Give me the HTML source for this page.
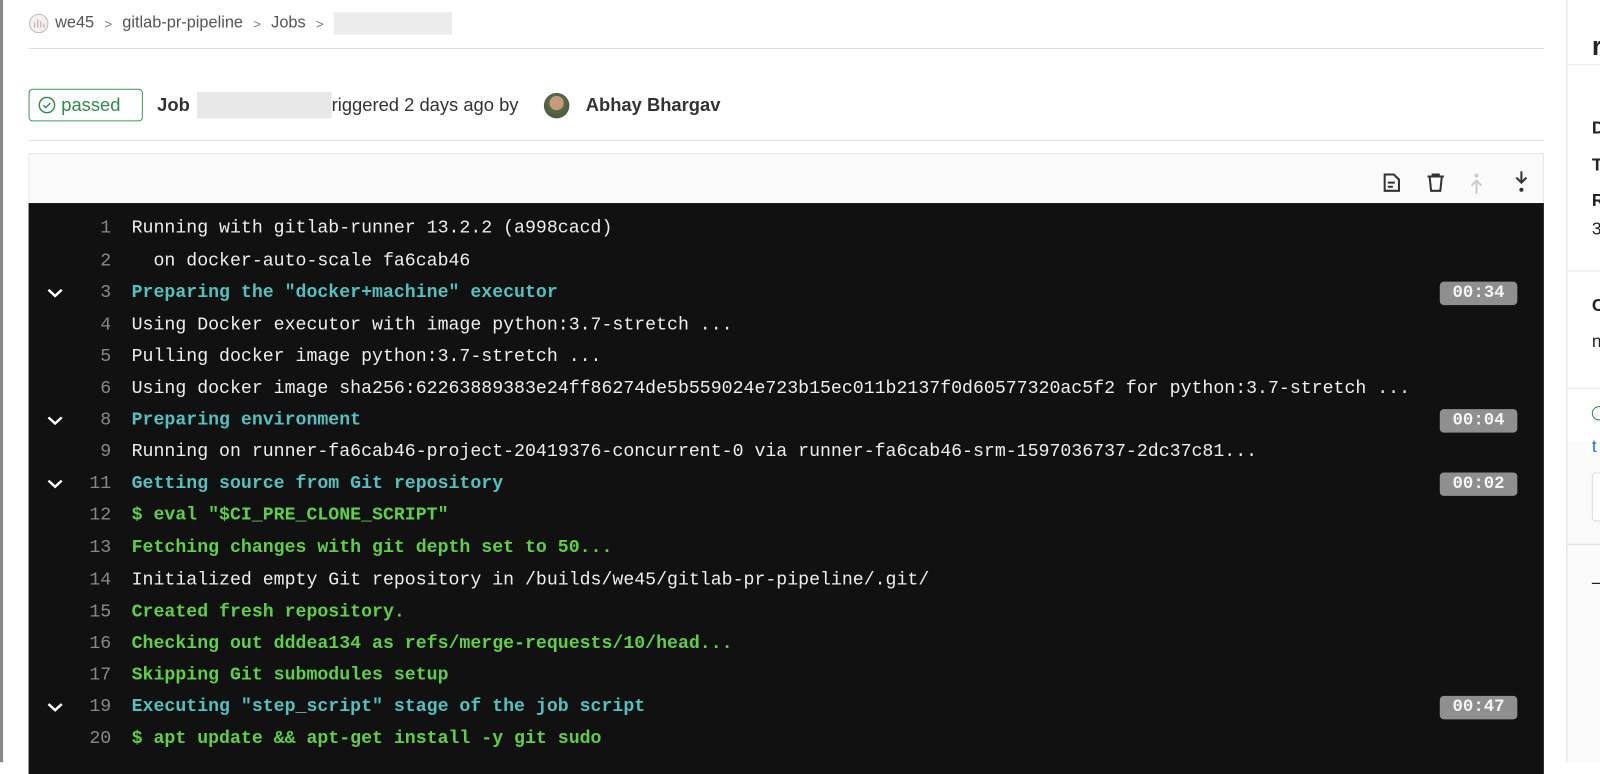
<!DOCTYPE html>
<html><head><meta charset="utf-8"><style>
*{margin:0;padding:0;box-sizing:border-box}
body{width:1600px;height:747px;overflow:hidden;background:#fff;font-family:"Liberation Sans",sans-serif;position:relative}
#w{position:absolute;left:0;top:0;width:1568px;height:732px;transform:scale(1.0204);transform-origin:0 0}
.lb{position:absolute;left:0;top:0;width:3px;height:747px;background:#888}
.bc{position:absolute;left:28px;top:10px;height:26px;display:flex;align-items:center;font-size:16px;color:#555}
.bc .sep{margin:0 10px;color:#777;font-size:13px}
.hr{position:absolute;left:28px;width:1485px;height:1px;background:#ddd}
.badge{position:absolute;left:28px;top:87px;width:112px;height:32px;border:1px solid #3a9a5a;border-radius:4px;color:#2f8a4c;font-size:18px;display:flex;align-items:center;padding-left:8px}
.blur{position:absolute;background:#e8e8e8}
.hd{position:absolute;top:90px;font-size:18px;color:#333;line-height:26px}
.tb{position:absolute;left:28px;top:150px;width:1485px;height:50px;background:#fafafa;border:1px solid #e5e5e5;border-bottom:none}
.log{position:absolute;left:28px;top:199px;width:1485px;height:560px;background:#111;font-family:"Liberation Mono",monospace;font-size:17.85px;color:#eee}
.row{position:absolute;left:0;height:31px;line-height:31px;white-space:pre;width:100%}
.n{position:absolute;right:1404px;color:#888;text-align:right}
.t{position:absolute;left:101px}
.c{color:#52c1c1;font-weight:bold}
.g{color:#5fd046;font-weight:bold}
.chev{position:absolute;left:18px;top:8px;width:16px;height:14px}
.tm{position:absolute;left:1383px;top:4px;width:76px;height:23px;background:#8f8f8f;border-radius:4px;color:#f5f5f5;font-size:17px;line-height:23px;text-align:center;font-weight:bold}
.side{position:absolute;left:1535px;top:0;width:65px;height:747px;border-left:1px solid #ddd;background:#fff}
.side div{position:absolute;left:24px;font-size:18px;font-weight:bold;color:#222}
</style></head><body><div id="w">
<div class="lb"></div>
<div class="bc"><svg width="20" height="20" viewBox="0 0 20 20"><circle cx="10" cy="10" r="9" fill="#f2f2f2" stroke="#bbb"/><path d="M6 14V9M9 14V6M12 14V8M15 14V10" stroke="#c99" stroke-width="1"/></svg><span style="margin-left:6px">we45</span><span class="sep">&gt;</span>gitlab-pr-pipeline<span class="sep">&gt;</span>Jobs<span class="sep">&gt;</span><span style="display:inline-block;width:116px;height:22px;background:#ececec"></span></div>
<div class="hr" style="top:47px"></div>
<div class="badge"><svg width="18" height="18" viewBox="0 0 18 18" style="margin-right:5px"><circle cx="9" cy="9" r="7.5" fill="none" stroke="#2f8a4c" stroke-width="1.4"/><path d="M5.5 9.2l2.3 2.3 4.5-4.5" fill="none" stroke="#2f8a4c" stroke-width="1.4"/></svg>passed</div>
<div class="hd" style="left:154px;font-weight:bold">Job</div>
<div class="blur" style="left:193px;top:90px;width:132px;height:26px"></div>
<div class="hd" style="left:325px">riggered 2 days ago by</div>
<div style="position:absolute;left:533px;top:91px;width:25px;height:25px;border-radius:50%;background:radial-gradient(circle at 50% 40%,#c99a7a 35%,#5a6a4a 36%,#3c5030 100%)"></div>
<div class="hd" style="left:574px;font-weight:bold">Abhay Bhargav</div>
<div class="hr" style="top:137px"></div>
<div class="tb">
<svg style="position:absolute;left:1326px;top:18px" width="18" height="20" viewBox="0 0 18 20"><path d="M2 2h9l5 5v11H2z" fill="none" stroke="#333" stroke-width="2"/><path d="M5 10h7M5 14h5" stroke="#333" stroke-width="2"/></svg>
<svg style="position:absolute;left:1368px;top:18px" width="20" height="20" viewBox="0 0 20 20"><path d="M2 4h16M7 4V2h6v2M4 4l1.5 14h9L16 4" fill="none" stroke="#333" stroke-width="2"/></svg>
<svg style="position:absolute;left:1411px;top:18px" width="14" height="22" viewBox="0 0 14 22"><circle cx="7" cy="3" r="2" fill="#ccc"/><path d="M7 8v13M2 13l5-5 5 5" fill="none" stroke="#ccc" stroke-width="2"/></svg>
<svg style="position:absolute;left:1455px;top:16px" width="14" height="22" viewBox="0 0 14 22"><path d="M7 1v11M2 7l5 5 5-5" fill="none" stroke="#333" stroke-width="2"/><circle cx="7" cy="19" r="2" fill="#333"/></svg>
</div>
<div class="log">
<div class="row" style="top:10px"><span class="n">1</span><span class="t">Running with gitlab-runner 13.2.2 (a998cacd)</span></div>
<div class="row" style="top:42px"><span class="n">2</span><span class="t">  on docker-auto-scale fa6cab46</span></div>
<div class="row" style="top:73px"><svg class="chev" viewBox="0 0 16 14"><path d="M1.5 4l6.5 6 6.5-6" fill="none" stroke="#fff" stroke-width="2.4"/></svg><span class="n">3</span><span class="t c">Preparing the "docker+machine" executor</span><span class="tm">00:34</span></div>
<div class="row" style="top:105px"><span class="n">4</span><span class="t">Using Docker executor with image python:3.7-stretch ...</span></div>
<div class="row" style="top:136px"><span class="n">5</span><span class="t">Pulling docker image python:3.7-stretch ...</span></div>
<div class="row" style="top:167px"><span class="n">6</span><span class="t">Using docker image sha256:62263889383e24ff86274de5b559024e723b15ec011b2137f0d60577320ac5f2 for python:3.7-stretch ...</span></div>
<div class="row" style="top:198px"><svg class="chev" viewBox="0 0 16 14"><path d="M1.5 4l6.5 6 6.5-6" fill="none" stroke="#fff" stroke-width="2.4"/></svg><span class="n">8</span><span class="t c">Preparing environment</span><span class="tm">00:04</span></div>
<div class="row" style="top:229px"><span class="n">9</span><span class="t">Running on runner-fa6cab46-project-20419376-concurrent-0 via runner-fa6cab46-srm-1597036737-2dc37c81...</span></div>
<div class="row" style="top:260px"><svg class="chev" viewBox="0 0 16 14"><path d="M1.5 4l6.5 6 6.5-6" fill="none" stroke="#fff" stroke-width="2.4"/></svg><span class="n">11</span><span class="t c">Getting source from Git repository</span><span class="tm">00:02</span></div>
<div class="row" style="top:291px"><span class="n">12</span><span class="t g">$ eval "$CI_PRE_CLONE_SCRIPT"</span></div>
<div class="row" style="top:323px"><span class="n">13</span><span class="t g">Fetching changes with git depth set to 50...</span></div>
<div class="row" style="top:355px"><span class="n">14</span><span class="t">Initialized empty Git repository in /builds/we45/gitlab-pr-pipeline/.git/</span></div>
<div class="row" style="top:386px"><span class="n">15</span><span class="t g">Created fresh repository.</span></div>
<div class="row" style="top:417px"><span class="n">16</span><span class="t g">Checking out dddea134 as refs/merge-requests/10/head...</span></div>
<div class="row" style="top:448px"><span class="n">17</span><span class="t g">Skipping Git submodules setup</span></div>
<div class="row" style="top:479px"><svg class="chev" viewBox="0 0 16 14"><path d="M1.5 4l6.5 6 6.5-6" fill="none" stroke="#fff" stroke-width="2.4"/></svg><span class="n">19</span><span class="t c">Executing "step_script" stage of the job script</span><span class="tm">00:47</span></div>
<div class="row" style="top:510px"><span class="n">20</span><span class="t g">$ apt update &amp;&amp; apt-get install -y git sudo</span></div>
</div>
<div style="position:absolute;left:1536px;top:433px;width:64px;height:314px;background:#fafafa"></div>
<div class="side" style="background:transparent">
<div style="top:30px;font-size:26px">r</div>
<div style="top:116px;font-size:17px">D</div>
<div style="top:152px;font-size:17px">T</div>
<div style="top:187px;font-size:17px">R</div>
<div style="top:215px;font-size:17px;font-weight:normal">3</div>
<div style="top:290px;font-size:17px">C</div>
<div style="top:325px;font-size:17px;font-weight:normal">n</div>
<div style="top:398px;width:14px;height:14px;border:1.5px solid #2f8a4c;border-radius:50%"></div>
<div style="top:428px;font-size:17px;font-weight:normal;color:#1f6fd0">t</div>
<div style="top:463px;width:60px;height:48px;border:1px solid #ddd;border-radius:4px;background:#fff"></div>
<div style="top:560px;font-weight:normal">–</div>
</div>
<div style="position:absolute;left:1536px;top:533px;width:64px;height:1px;background:#ddd"></div>
<div style="position:absolute;left:1536px;top:63px;width:64px;height:1px;background:#e5e5e5"></div>
<div style="position:absolute;left:1536px;top:265px;width:64px;height:1px;background:#e5e5e5"></div>
<div style="position:absolute;left:1536px;top:380px;width:64px;height:1px;background:#e5e5e5"></div>
</div></body></html>
